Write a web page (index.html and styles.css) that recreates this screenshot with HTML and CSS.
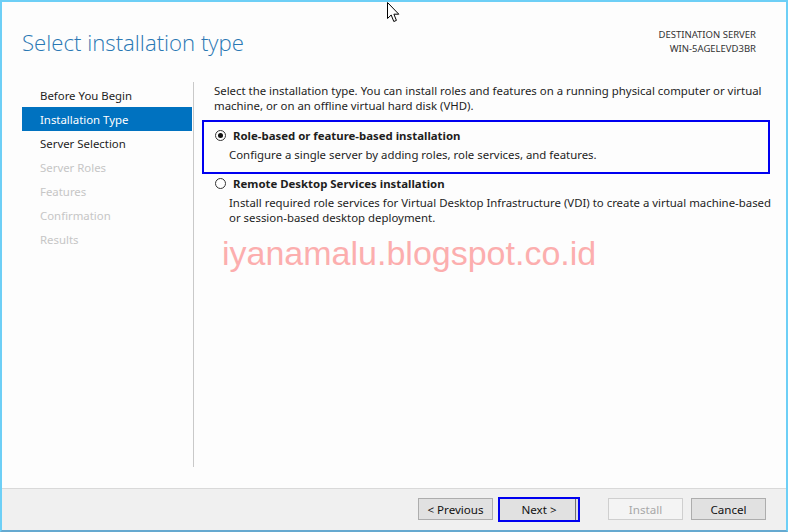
FILE: index.html
```html
<!DOCTYPE html>
<html lang="en">
<head>
  <meta charset="UTF-8" />
  <title>Add Roles and Features Wizard</title>
  <link rel="stylesheet" href="styles.css">
</head>
<body>

<div class="window">

  <!-- Header -->
  <div class="header">
    <h1 class="title">Select installation type</h1>
    <div class="dest">
      <div>DESTINATION SERVER</div>
      <div>WIN-5AGELEVD3BR</div>
    </div>
  </div>

  <!-- Nav + content -->
  <div class="main">
    <ul class="nav">
      <li>Before You Begin</li>
      <li class="active">Installation Type</li>
      <li>Server Selection</li>
      <li class="off">Server Roles</li>
      <li class="off">Features</li>
      <li class="off">Confirmation</li>
      <li class="off">Results</li>
    </ul>

    <div class="content">
      <p class="intro">Select the installation type. You can install roles and features on a running physical computer or virtual machine, or on an offline virtual hard disk (VHD).</p>

      <div class="option focused">
        <div class="opt-title"><span class="radio checked"></span>Role-based or feature-based installation</div>
        <div class="opt-desc">Configure a single server by adding roles, role services, and features.</div>
      </div>

      <div class="option second">
        <div class="opt-title"><span class="radio"></span>Remote Desktop Services installation</div>
        <div class="opt-desc">Install required role services for Virtual Desktop Infrastructure (VDI) to create a virtual machine-based or session-based desktop deployment.</div>
      </div>
    </div>
  </div>

  <!-- Footer buttons -->
  <div class="footer">
    <button class="btn">&lt; Previous</button>
    <button class="btn next">Next &gt;</button>
    <button class="btn install" disabled>Install</button>
    <button class="btn">Cancel</button>
  </div>

  <div class="watermark">iyanamalu.blogspot.co.id</div>

  <svg class="cursor" width="13" height="21" viewBox="0 0 13 21">
    <path d="M0.5 0.5 L0.5 16.5 L4.2 13 L6.8 19.5 L9.4 18.4 L6.9 12.2 L11.8 12.2 Z" fill="#fff" stroke="#000" stroke-width="1"/>
  </svg>

</div>

</body>
</html>
```

FILE: styles.css
```css
* {
  box-sizing: border-box;
}

body {
  margin: 0;
  font-family: 'Noto Sans', 'Open Sans', sans-serif;
  font-size: 11.4px;
  color: #1e1e1e;
  background: #fdfdfd;
}

.window {
  position: relative;
  width: 788px;
  height: 532px;
  display: flex;
  flex-direction: column;
  background: #fdfdfd;
  border: 2px solid #6dcff6;
  border-bottom-color: #65a9d0;
  overflow: hidden;
}

/* Header */
.header {
  height: 80px;
  display: flex;
  justify-content: space-between;
  padding: 0 30px 0 20px;
}

.title {
  margin: 0;
  padding-top: 26px;
  font-family: 'Open Sans', 'Noto Sans', sans-serif;
  font-weight: 300;
  font-size: 22.2px;
  line-height: 30px;
  color: #2a78b4;
}

.dest {
  padding-top: 26px;
  text-align: right;
  font-size: 9.5px;
  line-height: 14px;
  color: #333;
}

/* Main area */
.main {
  flex: 1;
  display: flex;
  padding-bottom: 21px;
}

.nav {
  list-style: none;
  margin: 0 0 0 20px;
  padding: 1px 0 0 0;
  width: 172px;
  border-right: 1px solid #c9c9c9;
}

.nav li {
  height: 24px;
  line-height: 25px;
  padding-left: 18px;
  margin-right: 1px;
  color: #1e1e1e;
}

.nav li.active {
  background: #0072c0;
  color: #fff;
}

.nav li.off {
  color: #c6c6c6;
}

.content {
  flex: 1;
  padding: 1px 16px 0 8px;
}

.intro {
  margin: 0 0 7px 12px;
  line-height: 15px;
}

.option {
  border: 2px solid transparent;
  padding: 6px 10px 10px 11px;
}

.option.focused {
  border-color: #0000f0;
}

.option.second {
  padding: 0 0 0 11px;
  margin-right: -12px;
}

.opt-title {
  display: flex;
  align-items: center;
  font-weight: bold;
  line-height: 15px;
}

.opt-desc {
  margin-top: 4px;
  padding-left: 14px;
  line-height: 15px;
}

.radio {
  width: 11px;
  height: 11px;
  border: 1px solid #333;
  border-radius: 50%;
  background: #fff;
  margin-right: 7px;
  display: flex;
  align-items: center;
  justify-content: center;
}

.radio.checked::after {
  content: "";
  width: 5px;
  height: 5px;
  border-radius: 50%;
  background: #111;
}

/* Footer */
.footer {
  height: 42px;
  border-top: 1px solid #d9d9d9;
  background: #f0f0f0;
  display: flex;
  justify-content: flex-end;
  align-items: center;
  padding: 0 20px 1px 0;
}

.btn {
  width: 75px;
  height: 22px;
  margin-left: 5px;
  font-family: 'Noto Sans', 'Open Sans', sans-serif;
  font-size: 11.6px;
  color: #111;
  background: #e1e1e1;
  border: 1px solid #adadad;
  padding: 0;
}

.btn.next {
  width: 82px;
  height: 25px;
  border: 2px solid #0000f0;
  box-shadow: inset -2px 0 0 #e1e1e1, inset -3px 0 0 #707070;
}

.btn.install {
  margin-left: 28px;
  background: #f4f4f4;
  border-color: #cfcfcf;
  color: #a8a8a8;
}

.btn.install + .btn {
  margin-left: 8px;
}

/* Overlays */
.watermark {
  position: absolute;
  left: 220px;
  top: 234px;
  font-family: 'Liberation Sans', Arial, sans-serif;
  font-size: 34px;
  line-height: 34px;
  color: #fcaeae;
}

.cursor {
  position: absolute;
  left: 385px;
  top: 0;
}
```
